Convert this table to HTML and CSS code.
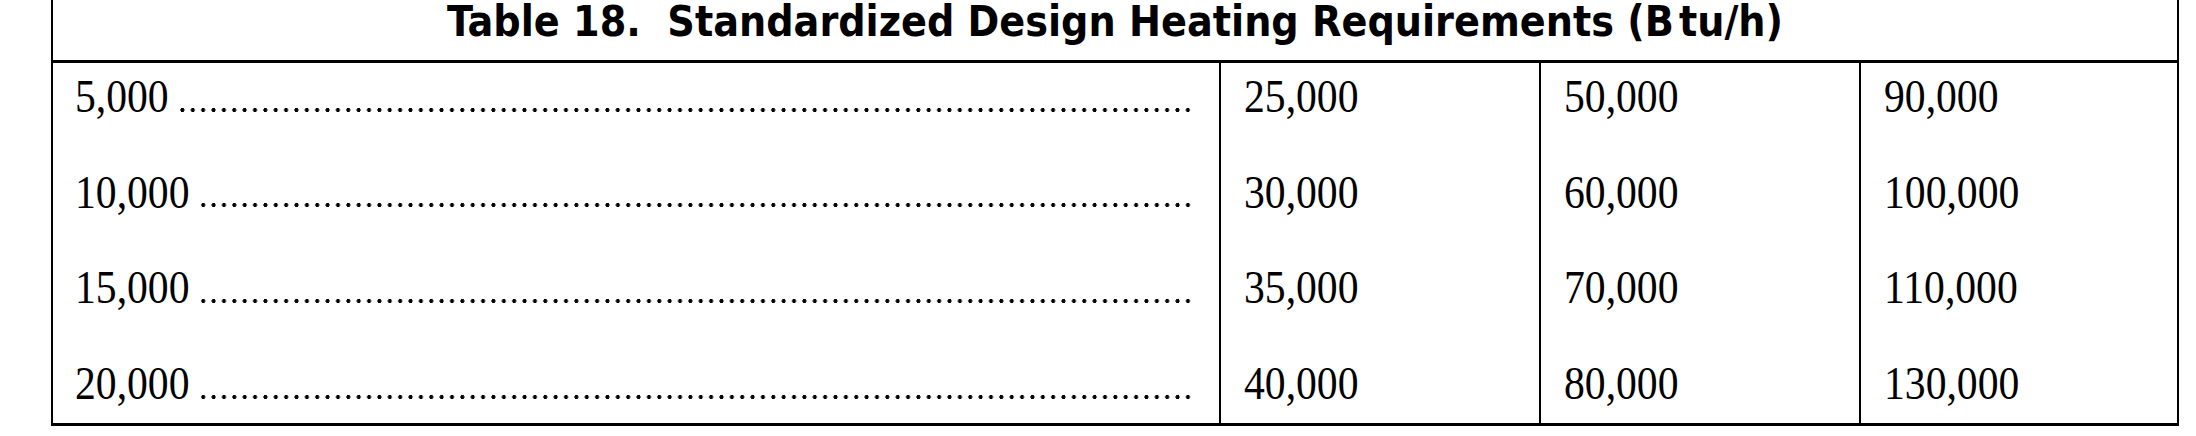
FILE: index.html
```html
<!DOCTYPE html>
<html lang="en">
<head>
<meta charset="utf-8">
<title>Table 18. Standardized Design Heating Requirements</title>
<link rel="stylesheet" href="styles.css">
</head>
<body>
<div class="sheet">
  <div class="title">Table 18.&nbsp; Standardized Design Heating Requirements (<span class="kern">B</span>tu/h)</div>
  <div class="grid">
    <div class="cell first">
      <div class="entry"><span class="lead-num">5,000</span><span class="leader"></span></div>
      <div class="entry"><span class="lead-num">10,000</span><span class="leader"></span></div>
      <div class="entry"><span class="lead-num">15,000</span><span class="leader"></span></div>
      <div class="entry"><span class="lead-num">20,000</span><span class="leader"></span></div>
    </div>
    <div class="cell">
      <div class="num">25,000</div>
      <div class="num">30,000</div>
      <div class="num">35,000</div>
      <div class="num">40,000</div>
    </div>
    <div class="cell">
      <div class="num">50,000</div>
      <div class="num">60,000</div>
      <div class="num">70,000</div>
      <div class="num">80,000</div>
    </div>
    <div class="cell">
      <div class="num">90,000</div>
      <div class="num">100,000</div>
      <div class="num">110,000</div>
      <div class="num">130,000</div>
    </div>
  </div>
</div>
</body>
</html>
```
FILE: styles.css
```css
html, body {
  margin: 0;
  padding: 0;
  background: #fff;
  color: #000;
}

.sheet {
  margin-left: 51px;
  width: 2128px;
  box-sizing: border-box;
  border-left: 2px solid #000;
  border-right: 2px solid #000;
  border-bottom: 3px solid #000;
}

.title {
  height: 60px;
  border-bottom: 3px solid #000;
  font-family: "DejaVu Sans Condensed", "DejaVu Sans", sans-serif;
  font-stretch: condensed;
  font-weight: bold;
  font-size: 42.5px;
  line-height: 44px;
  text-align: center;
  white-space: nowrap;
}

.kern {
  margin-right: 5px;
}

.grid {
  display: grid;
  grid-template-columns: 1168px 320px 320px 1fr;
  height: 360px;
}

.cell {
  box-sizing: border-box;
  border-right: 2px solid #000;
  padding: 11px 0 0 23px;
  display: flex;
  flex-direction: column;
  gap: 49.7px;
  font-family: "Liberation Serif", "Times New Roman", serif;
  font-size: 46px;
  line-height: 46px;
  overflow: hidden;
}

.cell:last-child {
  border-right: 0;
}

.cell.first {
  padding-left: 22px;
}

.num {
  height: 46px;
  white-space: nowrap;
  transform: scaleX(0.905);
  transform-origin: left center;
}

.entry {
  display: flex;
  width: 1236px;
  height: 46px;
  flex: none;
  transform: scaleX(0.905);
  transform-origin: left center;
}

.lead-num {
  flex: none;
  white-space: nowrap;
}

.leader {
  flex: 1;
  height: 8px;
  margin: 31.5px 0 0 9px;
  background-image: radial-gradient(circle, #000 1.9px, rgba(0, 0, 0, 0) 2.5px);
  background-size: 11.38px 8px;
  background-repeat: space no-repeat;
  background-position: right center;
}
```
